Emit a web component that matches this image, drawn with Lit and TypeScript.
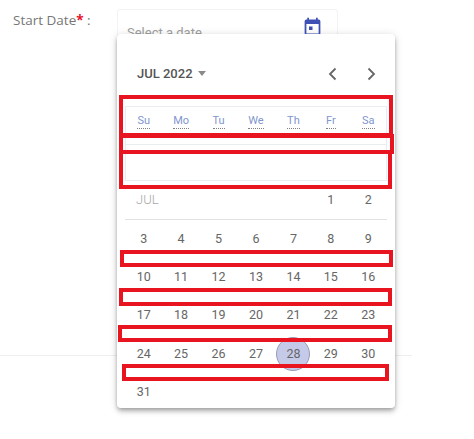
import { LitElement, html, css, svg } from "lit";
import { customElement } from "lit/decorators.js";

const WEEKDAYS = [["Su","Sunday"],["Mo","Monday"],["Tu","Tuesday"],["We","Wednesday"],["Th","Thursday"],["Fr","Friday"],["Sa","Saturday"]];
const WEEKS: (number | null)[][] = [
  [3,4,5,6,7,8,9],
  [10,11,12,13,14,15,16],
  [17,18,19,20,21,22,23],
  [24,25,26,27,28,29,30],
  [31,null,null,null,null,null,null],
];
const MARKS = ["m1","m2","m3","m4","m5","m6","m7"];

@customElement("app-root")
export class AppRoot extends LitElement {
  static styles = css`
    :host { display: block; position: relative; width: 474px; height: 439px; background: #fff; overflow: hidden; font-family: Roboto, sans-serif; }
    .form { display: flex; align-items: flex-start; padding: 9px 0 0 13px; gap: 26px; }
    .label { font: 500 13.5px/22px "Open Sans", sans-serif; color: #777; width: 78px; white-space: nowrap; }
    .label b { color: #e8112d; font-weight: 700; }
    .input { width: 221px; height: 60px; box-sizing: border-box; border: 1px solid #f3f3f3; border-radius: 3px; display: flex; justify-content: space-between; padding: 13px 14px 0 9px; font: 400 13px/20px Roboto, sans-serif; color: #a0a0a0; }
    .input svg { width: 21px; height: 21px; margin-top: -7px; }
    .rule { margin-top: 286px; height: 1px; width: 412px; background: #efefef; }
    .popup { position: absolute; left: 117px; top: 34px; width: 278px; height: 374px; box-sizing: border-box; background: #fff; border-radius: 4px; box-shadow: 0 2px 4px -1px rgba(0,0,0,.28), 0 4px 5px rgba(0,0,0,.14), 0 1px 10px rgba(0,0,0,.12); padding: 0 8px; }
    .head { display: flex; align-items: center; height: 61px; box-sizing: border-box; padding: 18px 0 0 12px; color: #4d4d4d; }
    .month { font: 500 13px/20px Roboto, sans-serif; color: #555; }
    .caret { width: 0; height: 0; margin-left: 5px; border-left: 4.5px solid transparent; border-right: 4.5px solid transparent; border-top: 5px solid #8a8a8a; }
    .nav { margin-left: auto; display: flex; gap: 22px; padding-right: 8px; }
    .nav svg { width: 16px; height: 16px; display: block; }
    .grid { display: grid; grid-template-columns: repeat(7, 1fr); text-align: center; }
    .wk { height: 52px; align-items: center; }
    .wk abbr { font: 400 11px/14px Roboto, sans-serif; color: #7f96cf; text-decoration: none; border-bottom: 1px dotted #808080; justify-self: center; }
    .spacer { height: 33px; }
    .jul { height: 40px; box-sizing: border-box; border-bottom: 1px solid #e2e2e2; display: grid; grid-template-columns: repeat(7, 1fr); align-items: center; text-align: center; font: 400 12.5px/16px Roboto, sans-serif; color: #666; }
    .jul .name { grid-column: 1 / span 5; text-align: left; padding-left: 11px; font-size: 13px; color: #a8a8a8; font-weight: 300; }
    .days { grid-auto-rows: 38.2px; align-items: center; font: 400 12.5px/16px Roboto, sans-serif; color: #666; }
    .day { position: relative; z-index: 0; }
    .today::before { content: ""; position: absolute; z-index: -1; left: 50%; top: 50%; width: 34px; height: 34px; transform: translate(-50%, -50%); border-radius: 50%; background: #c5cae9; border: 1px solid #9a9cb8; box-sizing: border-box; }
    .mark { position: absolute; border: 4px solid #e8141f; box-sizing: border-box; pointer-events: none; }
    .m1 { left: 119px; top: 95px; width: 274px; height: 42px; }
    .m2 { left: 119px; top: 134px; width: 275px; height: 20px; }
    .m3 { left: 119px; top: 150px; width: 273px; height: 39px; }
    .m4 { left: 120px; top: 250px; width: 273px; height: 17px; }
    .m5 { left: 119px; top: 288px; width: 273px; height: 18px; }
    .m6 { left: 118px; top: 325px; width: 274px; height: 17px; }
    .m7 { left: 122px; top: 364px; width: 267px; height: 17px; }
    .frame { position: absolute; left: 125px; top: 106px; width: 262px; height: 75px; border: 1px solid #e9ecf1; box-sizing: border-box; pointer-events: none; }
    .frame::after { content: ""; position: absolute; left: 0; right: 0; top: 37px; height: 1px; background: #e9ecf1; }
  `;

  render() {
    return html`
      <div class="form">
        <div class="label">Start Date<b>*</b> :</div>
        <div class="input">
          <span>Select a date</span>
          <svg viewBox="0 0 24 24" fill="#3f51b5" aria-hidden="true">
            ${svg`<path d="M19 4h-1V2h-2v2H8V2H6v2H5a2 2 0 0 0-2 2v14a2 2 0 0 0 2 2h14a2 2 0 0 0 2-2V6a2 2 0 0 0-2-2zm0 16H5V9h14v11zM8 12h4v4H8z"/>`}
          </svg>
        </div>
      </div>
      <div class="rule"></div>
      <div class="popup">
        <div class="head">
          <span class="month">JUL 2022</span><span class="caret"></span>
          <div class="nav">
            <svg viewBox="0 0 16 16" fill="none" stroke="#666" stroke-width="1.8"><path d="M10.5 2.5 5 8l5.5 5.5"/></svg>
            <svg viewBox="0 0 16 16" fill="none" stroke="#666" stroke-width="1.8"><path d="M5.5 2.5 11 8l-5.5 5.5"/></svg>
          </div>
        </div>
        <div class="grid wk">
          ${WEEKDAYS.map(([s, t]) => html`<abbr title=${t}>${s}</abbr>`)}
        </div>
        <div class="spacer"></div>
        <div class="jul">
          <span class="name">JUL</span><span>1</span><span>2</span>
        </div>
        <div class="grid days">
          ${WEEKS.flat().map((d) => html`<span class="day ${d === 28 ? "today" : ""}">${d ?? ""}</span>`)}
        </div>
      </div>
      <div class="frame"></div>
      ${MARKS.map((m) => html`<div class="mark ${m}"></div>`)}
    `;
  }
}
